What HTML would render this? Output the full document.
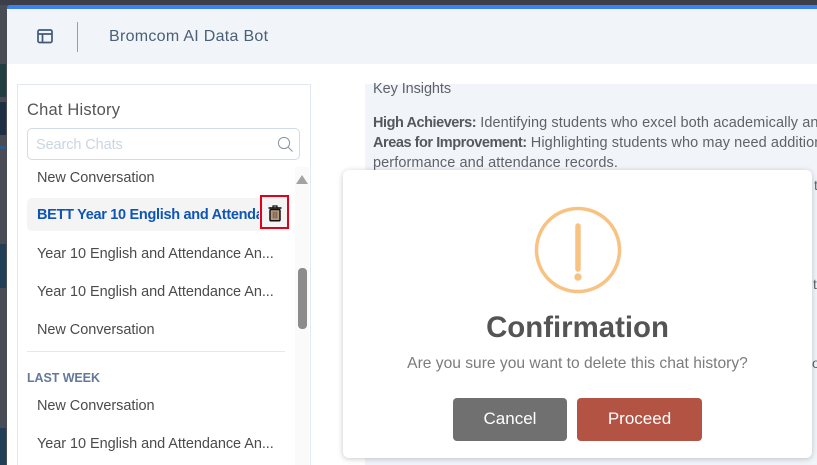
<!DOCTYPE html>
<html lang="en">
<head>
<meta charset="utf-8">
<title>Bromcom AI Data Bot</title>
<style>
html,body{margin:0;padding:0;width:817px;height:465px;overflow:hidden;background:#4a4c55}
*{box-sizing:border-box}
body{font-family:"Liberation Sans",sans-serif;position:relative}
.a{position:absolute;white-space:nowrap}
.it{left:37px;font-size:14.5px;letter-spacing:-.06px;color:#4b4b4b;line-height:18px}
.p{left:373px;font-size:14.5px;letter-spacing:.09px;color:#5f6368;line-height:18px}
.p b{color:#55585c;letter-spacing:-.45px}
</style>
</head>
<body>
<div class="a" style="left:0;top:0;width:817px;height:5px;background:#3d3f48"></div>
<div class="a" style="left:0;top:64px;width:6px;height:33px;background:#1f3f42"></div>
<div class="a" style="left:0;top:102px;width:6px;height:33px;background:#1d2f42"></div>
<div class="a" style="left:0;top:146px;width:6px;height:3px;background:#2f5a8a"></div>
<div class="a" style="left:0;top:244px;width:6px;height:44px;background:#223f58"></div>
<div class="a" style="left:0;top:428px;width:6px;height:37px;background:#223f58"></div>

<div class="a" style="left:6.5px;top:5px;width:811px;height:460px;background:#fff;border-top:4px solid #3b82f0;border-radius:3px 0 0 0"></div>
<div class="a" style="left:7px;top:9px;width:810px;height:55px;background:#f1f5f9"></div>

<svg class="a" style="left:37px;top:29px" width="16" height="15" viewBox="0 0 16 15" fill="none" stroke="#40597a" stroke-width="1.7">
<rect x="1" y="1" width="14" height="12.5" rx="1.5"/><path d="M1 5h14M5.5 5v8.5"/>
</svg>
<div class="a" style="left:77px;top:22px;width:1px;height:30px;background:#94a0ad"></div>
<div class="a" style="left:109px;top:27px;font-size:16px;letter-spacing:.29px;color:#4b5f78;line-height:19px">Bromcom AI Data Bot</div>

<div class="a" style="left:17px;top:84px;width:294px;height:390px;border:1.5px solid #e2e8f0;background:#fff"></div>
<div class="a" style="left:27px;top:99.5px;font-size:16.5px;letter-spacing:.2px;color:#555;line-height:20px">Chat History</div>
<div class="a" style="left:27px;top:128px;width:272.5px;height:32px;border:1px solid #cfdbe8;border-radius:5px;background:#fff"></div>
<div class="a" style="left:36px;top:136px;font-size:14.5px;letter-spacing:-.1px;color:#cbd5e1;line-height:18px">Search Chats</div>
<svg class="a" style="left:277px;top:136px" width="17" height="17" viewBox="0 0 17 17" fill="none" stroke="#8a949d" stroke-width="1">
<circle cx="7" cy="7" r="5.6"/><path d="M11 11l4.5 4.5"/>
</svg>

<div class="a" style="left:295px;top:167px;width:14px;height:298px;background:#fafafa"></div>
<svg class="a" style="left:296px;top:175px" width="12" height="9" viewBox="0 0 12 9"><path d="M6 0L12 9H0z" fill="#a3a3a3"/></svg>
<div class="a" style="left:298px;top:268px;width:8.5px;height:61px;background:#8c8c8c;border-radius:4px"></div>

<div class="a it" style="top:169px">New Conversation</div>
<div class="a" style="left:27px;top:198px;width:240px;height:33px;background:#f4f4f5;border-radius:5px"></div>
<div class="a it" style="top:206px;width:222px;overflow:hidden;color:#0f55b5;font-weight:bold;letter-spacing:-.3px">BETT Year 10 English and Attendance</div>
<div class="a" style="left:260px;top:195px;width:29px;height:34px;border:2.5px solid #e2001a;background:#f4f4f5"></div>
<svg class="a" style="left:268px;top:205px" width="14" height="17" viewBox="0 0 14 17" fill="none">
<path d="M5 2.5V1h4v1.5" stroke="#111" stroke-width="1.2"/>
<path d="M.5 3h13" stroke="#111" stroke-width="1.6"/>
<rect x="2" y="4.5" width="10" height="11.3" rx="1.2" fill="#c09a70" stroke="#111" stroke-width="1.5"/>
<path d="M5.2 6.5v7M7 6.5v7M8.8 6.5v7" stroke="#556" stroke-width=".9"/>
</svg>
<div class="a it" style="top:245px">Year 10 English and Attendance An...</div>
<div class="a it" style="top:283px">Year 10 English and Attendance An...</div>
<div class="a it" style="top:321px">New Conversation</div>
<div class="a" style="left:27px;top:351px;width:258px;height:1px;background:#e5e7eb"></div>
<div class="a" style="left:27px;top:371px;font-size:12.5px;font-weight:bold;letter-spacing:-.08px;color:#64789a;line-height:15px">LAST WEEK</div>
<div class="a it" style="top:397px">New Conversation</div>
<div class="a it" style="top:435px">Year 10 English and Attendance An...</div>

<div class="a" style="left:365px;top:84px;width:452px;height:381px;background:#f1f5f9"></div>
<div class="a p" style="top:80px;letter-spacing:-.08px">Key Insights</div>
<div class="a p" style="top:114px;width:444px;overflow:hidden"><b>High Achievers:</b> Identifying students who excel both academically and in attendance</div>
<div class="a p" style="top:134px;width:444px;overflow:hidden"><b>Areas for Improvement:</b> Highlighting students who may need additional support</div>
<div class="a p" style="top:154px">performance and attendance records.</div>
<div class="a" style="left:814px;top:176px;font-size:14px;color:#5f6368;line-height:18px">t</div>
<div class="a" style="left:813px;top:275px;font-size:14px;color:#5f6368;line-height:18px">t</div>
<div class="a" style="left:812px;top:354px;font-size:14px;color:#5f6368;line-height:18px">o</div>

<div class="a" style="left:343px;top:170px;width:469px;height:288px;background:#fff;border-radius:6px;box-shadow:0 1px 6px rgba(0,0,0,.22)"></div>
<svg class="a" style="left:530px;top:202px" width="96" height="96" viewBox="0 0 96 96" fill="none">
<circle cx="48" cy="48" r="41.5" stroke="#f8c283" stroke-width="3.5"/>
<path d="M48 24v43" stroke="#f8c283" stroke-width="5.5" stroke-linecap="round"/>
<circle cx="48" cy="75" r="3.7" fill="#f8c283"/>
</svg>
<div class="a" style="left:343px;width:469px;top:310px;text-align:center;font-size:29.4px;font-weight:bold;color:#545454;line-height:35px">Confirmation</div>
<div class="a" style="left:343px;width:469px;top:354px;text-align:center;font-size:15.6px;color:#7b7b7b;line-height:20px">Are you sure you want to delete this chat history?</div>
<div class="a" style="left:453px;top:398px;width:114px;height:43px;background:#707070;border-radius:4px;color:#fff;font-size:17px;line-height:42px;text-align:center">Cancel</div>
<div class="a" style="left:577px;top:398px;width:125px;height:43px;background:#b25344;border-radius:4px;color:#fff;font-size:17px;line-height:42px;text-align:center">Proceed</div>
</body>
</html>
